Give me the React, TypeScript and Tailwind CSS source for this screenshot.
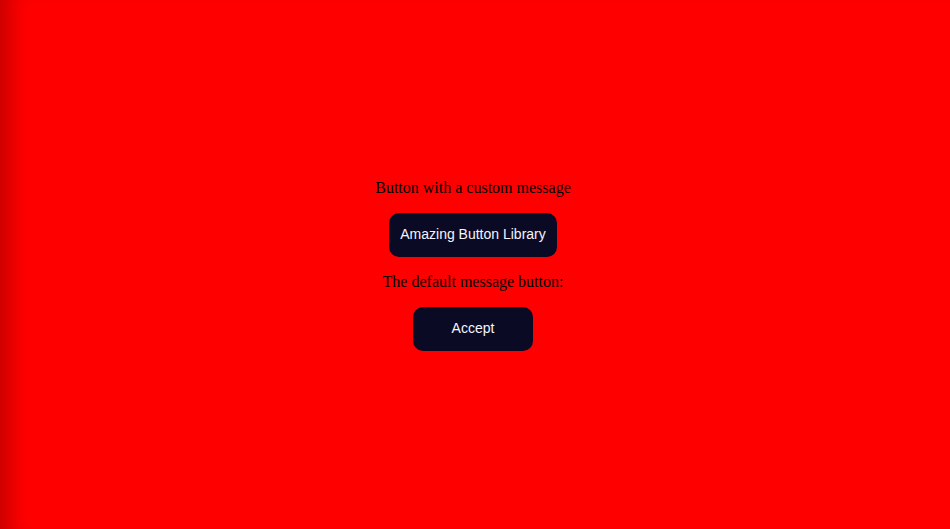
import React from 'react';

const Button: React.FC<{ message?: string }> = ({ message = 'Accept' }) => (
  <button
    className="min-w-[120px] h-[44px] px-[11px] rounded-[10px] bg-[#0a0a25] text-[#f4f4ff] text-[14px] font-medium cursor-pointer"
    style={{ fontFamily: 'Arial, "Liberation Sans", sans-serif' }}
  >
    {message}
  </button>
);

export default function App() {
  return (
    <div
      className="min-h-screen bg-[#ff0000] flex flex-col items-center justify-center gap-4 pr-[4px] text-black shadow-[inset_24px_0_20px_-14px_rgba(0,0,0,0.22)]"
      style={{ fontFamily: '"Liberation Serif", "Times New Roman", serif' }}
    >
      <p className="text-base leading-[18px]">Button with a custom message</p>
      <Button message="Amazing Button Library" />
      <p className="text-base leading-[18px]">The default message button:</p>
      <Button />
    </div>
  );
}
